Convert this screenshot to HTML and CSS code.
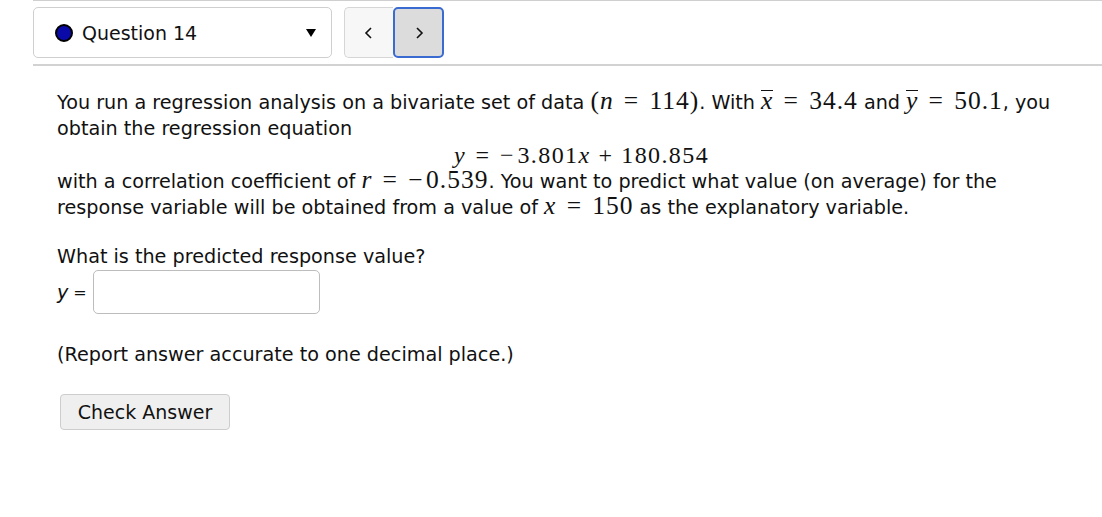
FILE: index.html
```html
<!DOCTYPE html>
<html>
<head>
<meta charset="utf-8">
<link rel="stylesheet" href="styles.css">
</head>
<body>
<div class="topbar">
  <div class="qselect">
    <span class="dot"></span>
    <span class="qlabel">Question 14</span>
    <span class="caret"></span>
  </div>
  <div class="nav">
    <button class="navbtn prev"><svg width="12" height="16" viewBox="0 0 12 16"><path d="M8 3 L3 8 L8 13" fill="none" stroke="#111" stroke-width="1.6"/></svg></button>
    <button class="navbtn next"><svg width="12" height="16" viewBox="0 0 12 16"><path d="M4 3 L9 8 L4 13" fill="none" stroke="#111" stroke-width="1.6"/></svg></button>
  </div>
</div>
<div class="content">
  <p class="problem">You run a regression analysis on a bivariate set of data <span class="m">(<i>n</i><span class="rel">=</span>114)</span>. With <span class="m"><i class="bar">x</i><span class="rel">=</span>34.4</span> and <span class="m"><i class="bar">y</i><span class="rel">=</span>50.1</span>, you<br>obtain the regression equation<br><span class="eq m"><i>y</i><span class="rel">=</span><span class="un">−</span>3.801<i>x</i><span class="bin">+</span>180.854</span>with a correlation coefficient of <span class="m"><i>r</i><span class="rel">=</span><span class="un">−</span>0.539</span>. You want to predict what value (on average) for the<br>response variable will be obtained from a value of <span class="m"><i>x</i><span class="rel">=</span>150</span> as the explanatory variable.</p>
  <p class="ask">What is the predicted response value?</p>
  <div class="answer">
    <span class="yl">y</span><span class="eqsign">=</span>
    <span class="input"></span>
  </div>
  <p class="note">(Report answer accurate to one decimal place.)</p>
  <button class="check">Check Answer</button>
</div>
</body>
</html>
```

FILE: styles.css
```css
html, body {
  margin: 0;
  padding: 0;
  background: #fff;
}
body {
  font-family: "DejaVu Sans", sans-serif;
  font-size: 19.2px;
  color: #111;
}
.topbar {
  margin-left: 33px;
  border-top: 1px solid #cfcfcf;
  border-bottom: 2px solid #d2d2d2;
  padding: 6px 0 6px 0;
  display: flex;
  align-items: center;
  gap: 12px;
}
.qselect {
  box-sizing: border-box;
  width: 299px;
  height: 51px;
  border: 1px solid #cfcfcf;
  border-radius: 5px;
  display: flex;
  align-items: center;
  padding-left: 21px;
  padding-right: 15px;
}
.dot {
  width: 14px;
  height: 14px;
  border-radius: 50%;
  background: #0a0aa8;
  border: 2px solid #000;
  margin-right: 9px;
}
.qlabel {
  font-size: 19px;
  flex: 1;
}
.caret {
  width: 0;
  height: 0;
  border-left: 5.5px solid transparent;
  border-right: 5.5px solid transparent;
  border-top: 8px solid #000;
}
.nav {
  display: flex;
}
.navbtn {
  box-sizing: border-box;
  height: 51px;
  display: flex;
  align-items: center;
  justify-content: center;
  padding: 0;
  margin: 0;
}
.prev {
  width: 49px;
  background: #f7f7f7;
  border: 1px solid #d6d6d6;
  border-right: none;
  border-radius: 5px 0 0 5px;
}
.next {
  width: 51px;
  background: #dcdcdc;
  border: 2px solid #3a6bd0;
  border-radius: 5px;
}
.content {
  padding-left: 57px;
  margin-top: 24px;
}
.problem {
  margin: 0;
  line-height: 26px;
}
.m {
  font-family: "Liberation Serif", "DejaVu Serif", serif;
  font-size: 25.5px;
  line-height: 0;
  letter-spacing: 1px;
}
.m i {
  font-style: italic;
}
.rel {
  margin: 0 0.4em;
}
.bin {
  margin: 0 0.33em;
}
.un {
  margin-right: 0.1em;
}
.bar {
  display: inline-block;
  border-top: 1px solid #111;
  line-height: 0.75em;
  padding-top: 0;
}
.eq {
  display: block;
  text-align: center;
  line-height: 27px;
  font-size: 24px;
  letter-spacing: 1.4px;
  padding-left: 4px;
}
.ask {
  margin: 23px 0 0 0;
  line-height: 26px;
}
.answer {
  display: flex;
  align-items: center;
  margin-top: 0;
  height: 44px;
}
.yl {
  font-style: italic;
}
.eqsign {
  margin-left: 5px;
  margin-right: 6px;
  font-size: 16px;
}
.input {
  box-sizing: border-box;
  width: 227px;
  height: 44px;
  border: 1px solid #bdbdbd;
  border-radius: 5px;
}
.note {
  margin: 28px 0 0 0;
  line-height: 26px;
}
.check {
  margin: 26px 0 0 3px;
  box-sizing: border-box;
  width: 170px;
  height: 36px;
  background: #efefef;
  border: 1px solid #cdcdcd;
  border-radius: 4px;
  font-family: inherit;
  font-size: 19px;
  color: #111;
  padding: 0;
}
```
